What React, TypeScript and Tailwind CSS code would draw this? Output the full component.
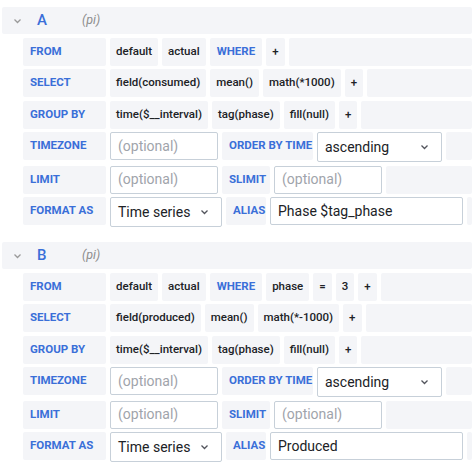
import React from 'react';

type Item = { text: string; kind?: 'label' | 'seg' | 'plus' | 'input' | 'select' | 'value'; w?: string; ph?: boolean };

const font = { fontFamily: 'Roboto, "Liberation Sans", sans-serif' };

function Chevron({ className = '' }: { className?: string }) {
  return (
    <svg width="9" height="6" viewBox="0 0 9 6" className={className}>
      <path d="M1.5 1.5 L4.5 4.5 L7.5 1.5" fill="none" stroke="currentColor" strokeWidth="1.3" />
    </svg>
  );
}

function Cell({ item }: { item: Item }) {
  if (item.kind === 'label') {
    return (
      <div className={`flex h-[28px] shrink-0 items-center whitespace-nowrap rounded-[2px] bg-[#f4f5f8] px-[7px] text-[11.5px] font-bold text-[#3a6fd8] ${item.w ?? ''}`}>
        {item.text}
      </div>
    );
  }
  if (item.kind === 'input') {
    return (
      <div className={`flex h-[28px] shrink-0 items-center whitespace-nowrap rounded-[2px] border border-[#c7d0d9] bg-white px-[7px] text-[14px] ${item.ph ? 'text-[#9fa4ab]' : 'text-[#202226]'} ${item.w ?? ''}`}>
        {item.text}
      </div>
    );
  }
  if (item.kind === 'select') {
    return (
      <div className={`flex h-[30px] shrink-0 items-center justify-between whitespace-nowrap rounded-[2px] border border-[#c7d0d9] bg-white pl-[7px] pr-[12px] text-[14px] text-[#202226] ${item.w ?? ''}`}>
        <span>{item.text}</span>
        <Chevron className="text-[#52545c]" />
      </div>
    );
  }
  return (
    <div className={`flex h-[28px] shrink-0 items-center whitespace-nowrap rounded-[2px] bg-[#f4f5f8] px-[6px] text-[11.5px] font-medium text-[#202226] ${item.w ?? ''}`}>
      {item.text}
    </div>
  );
}

function Row({ items }: { items: Item[] }) {
  return (
    <div className="flex items-start gap-[4px]">
      {items.map((it, i) => (
        <Cell key={i} item={it} />
      ))}
      <div className="h-[28px] flex-1 rounded-[2px] bg-[#f4f5f8]" />
    </div>
  );
}

const L = (text: string, w = 'w-[83px]'): Item => ({ text, kind: 'label', w });
const S = (text: string): Item => ({ text, kind: 'seg' });
const P: Item = { text: '+', kind: 'plus' };
const KW = (text: string): Item => ({ text, kind: 'label' });

function Query({ name, field, mathExpr, where, alias }: { name: string; field: string; mathExpr: string; where: boolean; alias: string }) {
  const fromRow: Item[] = [L('FROM'), S('default'), S('actual'), KW('WHERE')];
  if (where) fromRow.push(S('phase'), S('='), S('3'));
  fromRow.push(P);
  return (
    <div className="flex flex-col gap-[3.5px]">
      <div className="flex h-[27px] items-center rounded-[2px] bg-[#f4f5f8] pl-[11px]">
        <Chevron className="text-[#9a9a9a]" />
        <span className="ml-[15px] w-[45px] text-[15px] font-medium text-[#3a6fd8]">{name}</span>
        <span className="text-[12.5px] italic text-[#8e8e8e]">(pi)</span>
      </div>
      <div className="flex flex-col gap-[3.5px] pl-[21px]">
        <Row items={fromRow} />
        <Row items={[L('SELECT'), S(field), S('mean()'), S(mathExpr), P]} />
        <Row items={[L('GROUP BY'), S('time($__interval)'), S('tag(phase)'), S('fill(null)'), P]} />
        <Row
          items={[
            L('TIMEZONE'),
            { text: '(optional)', kind: 'input', w: 'w-[108px]', ph: true },
            L('ORDER BY TIME', 'w-[91px]'),
            { text: 'ascending', kind: 'select', w: 'w-[125px]' },
          ]}
        />
        <Row
          items={[
            L('LIMIT'),
            { text: '(optional)', kind: 'input', w: 'w-[108px]', ph: true },
            L('SLIMIT', 'w-[48px]'),
            { text: '(optional)', kind: 'input', w: 'w-[108px]', ph: true },
          ]}
        />
        <Row
          items={[
            L('FORMAT AS'),
            { text: 'Time series', kind: 'select', w: 'w-[112px]' },
            L('ALIAS', 'w-[40px]'),
            { text: alias, kind: 'input', w: 'w-[193px]' },
          ]}
        />
      </div>
    </div>
  );
}

export default function App() {
  return (
    <div className="min-h-[467px] w-[474px] bg-white px-[2px] pt-[7px]" style={font}>
      <div className="flex flex-col gap-[15px]">
        <Query name="A" field="field(consumed)" mathExpr="math(*1000)" where={false} alias="Phase $tag_phase" />
        <Query name="B" field="field(produced)" mathExpr="math(*-1000)" where={true} alias="Produced" />
      </div>
    </div>
  );
}
